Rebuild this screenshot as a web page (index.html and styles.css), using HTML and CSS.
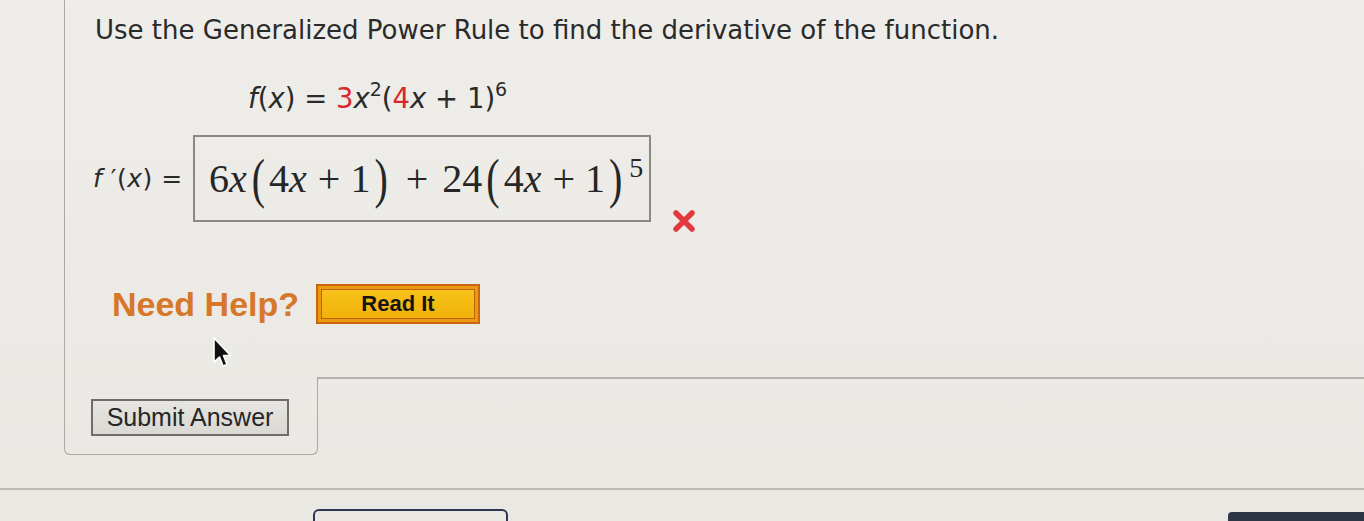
FILE: index.html
```html
<!DOCTYPE html>
<html lang="en">
<head>
<meta charset="utf-8">
<title>Generalized Power Rule</title>
<link rel="stylesheet" href="styles.css">
</head>
<body>
<div class="page">
  <div class="card">
    <div class="card-body">
      <p class="prompt">Use the Generalized Power Rule to find the derivative of the function.</p>
      <div class="given"><i>f</i>(<i>x</i>) = <span class="red">3</span><i>x</i><sup>2</sup>(<span class="red">4</span><i>x</i> + 1)<sup>6</sup></div>
      <div class="answer-row">
        <span class="answer-label"><i>f</i> &#8242;(<i>x</i>) =</span>
        <div class="answer-box">
          <span class="m">6<i>x</i></span><span class="paren">(</span><span class="m">4<i>x</i> + 1</span><span class="paren">)</span><span class="m op">+</span><span class="m">24</span><span class="paren">(</span><span class="m">4<i>x</i> + 1</span><span class="paren">)</span><sup class="m exp">5</sup>
        </div>
        <svg class="x-mark" width="26" height="26" viewBox="0 0 26 26" aria-hidden="true">
          <path d="M5 5 L21 21 M21 5 L5 21" stroke="#e23a3f" stroke-width="5.5" stroke-linecap="round"/>
        </svg>
      </div>
      <div class="help-row">
        <span class="need-help">Need Help?</span>
        <button class="read-it"><span class="read-inner">Read It</span></button>
      </div>
    </div>
    <div class="card-foot">
      <div class="submit-cell"><button class="submit">Submit Answer</button></div>
      <div class="foot-rest"></div>
    </div>
  </div>
  <div class="divider"></div>
  <div class="next-row">
    <div class="tab-outline"></div>
    <div class="tab-dark"></div>
  </div>
  <svg class="cursor" width="22" height="34" viewBox="0 0 22 34" aria-hidden="true">
    <path d="M2 2 L2 26 L7.5 21 L11 30 L15 28.5 L11.5 19.5 L18.5 19.5 Z" fill="#111" stroke="#fff" stroke-width="1.6" stroke-linejoin="round"/>
  </svg>
</div>
</body>
</html>
```

FILE: styles.css
```css
* { box-sizing: border-box; }
html, body {
  margin: 0;
  padding: 0;
  background: #ebeae5;
}
.page {
  position: relative;
  width: 1364px;
  height: 521px;
  overflow: hidden;
  background: linear-gradient(180deg, #eeede9 0%, #e9e8e3 100%);
  font-family: "DejaVu Sans", Verdana, sans-serif;
  color: #2b2b2b;
}
.card {
  margin-left: 64px;
}
.card-body {
  height: 377px;
  border-left: 1.5px solid #aaa9a4;
  padding: 14px 0 0 30px;
}
.prompt {
  margin: 0;
  font-size: 26px;
  line-height: 32px;
  color: #2a2a2a;
}
.given {
  margin: 35px 0 0 153px;
  font-size: 27.5px;
  line-height: 34px;
  color: #2a2a2a;
}
.given sup {
  font-size: 19px;
  line-height: 0;
  vertical-align: 12px;
}
.red { color: #d8282c; }
.answer-row {
  display: flex;
  align-items: center;
  margin: 20px 0 0 -2px;
}
.answer-label {
  font-size: 25px;
  color: #2a2a2a;
  width: 100px;
  white-space: nowrap;
  letter-spacing: 0.5px;
}
.answer-box {
  width: 458px;
  height: 87px;
  border: 2px solid #8a8984;
  display: flex;
  align-items: center;
  padding-left: 14px;
  font-family: "Liberation Serif", "Times New Roman", serif;
  color: #262626;
}
.m {
  font-size: 40px;
  line-height: 1;
  white-space: pre;
}
.m i { margin-right: 1px; }
.op { margin: 0 14px; }
.paren {
  font-family: "Liberation Serif", serif;
  font-size: 40px;
  line-height: 1;
  display: inline-block;
  transform: scaleY(1.35);
  margin: 0 4px;
}
.exp {
  font-size: 28px;
  align-self: flex-start;
  margin-top: 17px;
  margin-left: 3px;
}
.x-mark {
  align-self: flex-end;
  margin: 0 0 -12px 20px;
}
.help-row {
  display: flex;
  align-items: center;
  margin: 62px 0 0 17px;
}
.need-help {
  font-family: "Liberation Sans", Arial, sans-serif;
  font-weight: bold;
  font-size: 34px;
  color: #d6772a;
  width: 204px;
  white-space: nowrap;
}
.read-it {
  width: 164px;
  height: 40px;
  padding: 3px;
  border: 2px solid #c9660e;
  background: #e99a10;
  cursor: pointer;
}
.read-inner {
  display: flex;
  align-items: center;
  justify-content: center;
  height: 100%;
  border: 1.5px solid #b9620c;
  background: linear-gradient(180deg, #f7c21a 0%, #f2b20a 100%);
  font-family: "Liberation Sans", Arial, sans-serif;
  font-weight: bold;
  font-size: 22px;
  color: #151515;
}
.card-foot {
  display: flex;
  height: 78px;
}
.submit-cell {
  width: 254px;
  border-left: 1.5px solid #aaa9a4;
  border-right: 1.5px solid #aaa9a4;
  border-bottom: 1.5px solid #aaa9a4;
  border-radius: 0 0 6px 6px;
  padding: 22px 0 0 26px;
}
.foot-rest {
  flex: 1;
  border-top: 2px solid #b5b3ad;
}
.submit {
  width: 198px;
  height: 37px;
  border: 2px solid #6e6d69;
  background: linear-gradient(180deg, #e6e5e1 0%, #d9d8d3 100%);
  font-family: "Liberation Sans", Arial, sans-serif;
  font-size: 25px;
  color: #262626;
  padding: 0;
  white-space: nowrap;
}
.divider {
  margin-top: 33px;
  border-top: 2px solid #bcbab4;
}
.next-row {
  display: flex;
  margin-top: 19px;
}
.tab-outline {
  margin-left: 313px;
  width: 195px;
  height: 20px;
  border: 2.5px solid #2c3853;
  border-bottom: none;
  border-radius: 6px 6px 0 0;
}
.tab-dark {
  margin-left: 720px;
  margin-top: 3px;
  flex: 1;
  height: 20px;
  background: #2d3547;
  border-radius: 4px 0 0 0;
}
.cursor {
  position: absolute;
  left: 212px;
  top: 336px;
}
```
